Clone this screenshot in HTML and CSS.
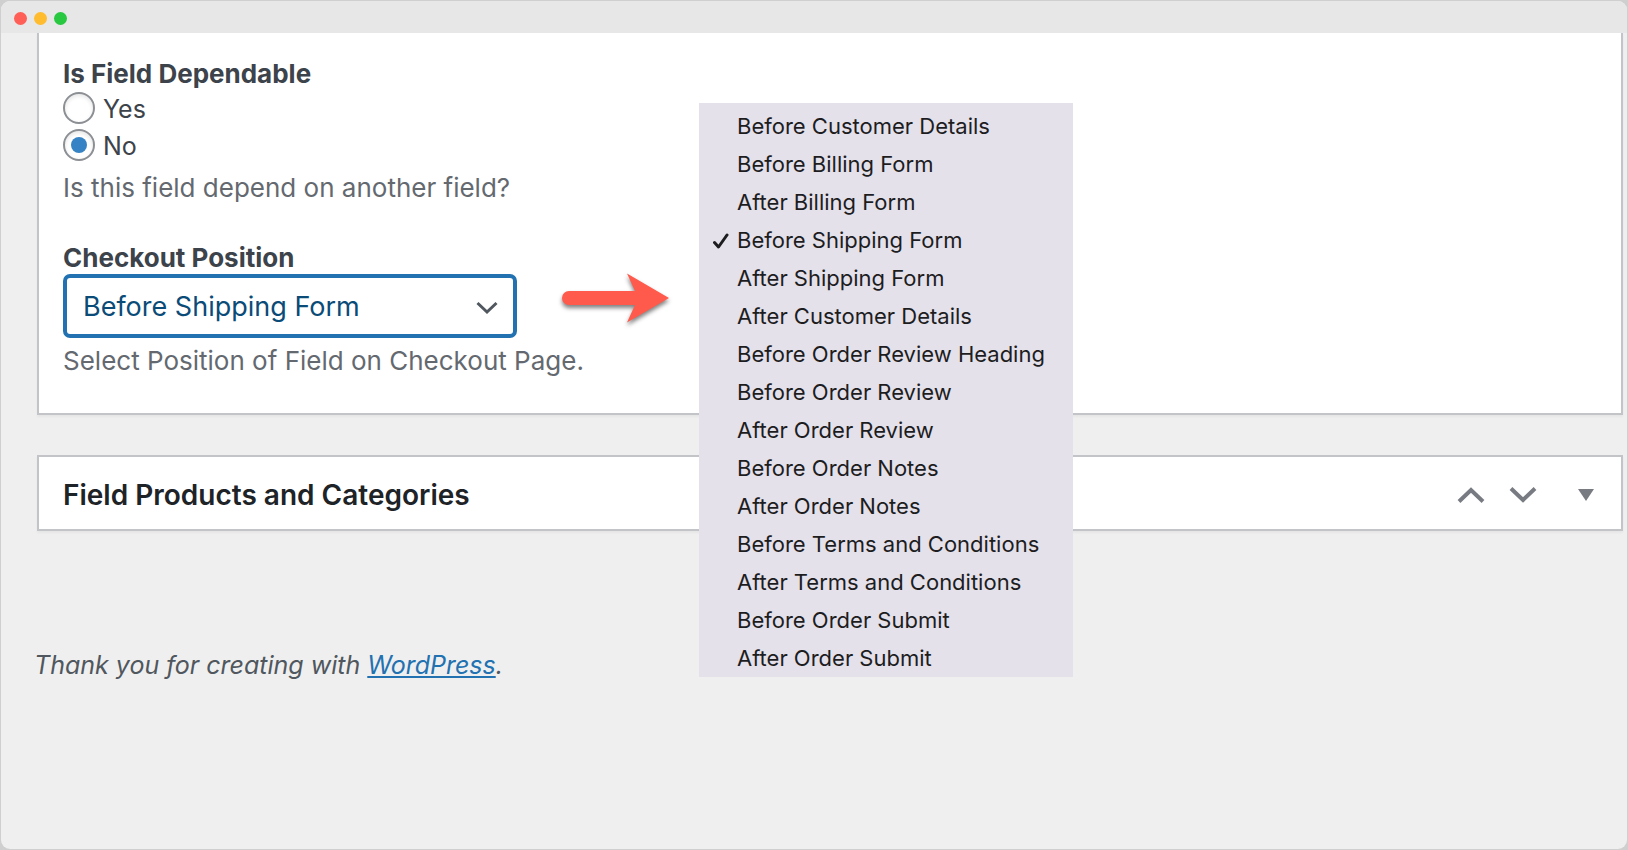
FILE: index.html
```html
<!DOCTYPE html>
<html lang="en">
<head>
<meta charset="utf-8">
<title>Checkout Field Settings</title>
<link rel="stylesheet" href="styles.css">
</head>
<body>
<div class="window">
  <header class="titlebar">
    <span class="dot dot-close"></span>
    <span class="dot dot-minimize"></span>
    <span class="dot dot-zoom"></span>
  </header>
  <main class="content">
    <section class="panel panel-fields">
      <fieldset class="field">
        <legend class="field-label">Is Field Dependable</legend>
        <div class="radio-group">
          <label class="radio-row"><input class="radio" type="radio" name="dependable" value="yes"><span class="radio-text">Yes</span></label>
          <label class="radio-row"><input class="radio" type="radio" name="dependable" value="no" checked><span class="radio-text">No</span></label>
        </div>
        <p class="description">Is this field depend on another field?</p>
      </fieldset>
      <div class="field">
        <label class="field-label" for="position">Checkout Position</label>
        <div class="select-row">
          <div class="select-wrap">
            <select class="select" id="position">
              <option>Before Shipping Form</option>
            </select>
            <svg class="select-chevron" viewBox="0 0 22 14" aria-hidden="true"><path d="M1.500 2l9.500 9 9.500-9"/></svg>
          </div>
          <svg class="arrow" viewBox="0 0 108 50" aria-hidden="true"><path d="M7 18H73L65 0.500L107 25L65 49.500L73 32H7A7 7 0 0 1 7 18Z"/></svg>
          <ul class="menu" role="listbox" aria-label="Checkout Position">
            <li class="menu-item" role="option">Before Customer Details</li>
            <li class="menu-item" role="option">Before Billing Form</li>
            <li class="menu-item" role="option">After Billing Form</li>
            <li class="menu-item" role="option" aria-selected="true"><svg class="check" viewBox="0 0 16 16" aria-hidden="true"><path d="M1.500 9.500L5.500 14L14 2"/></svg>Before Shipping Form</li>
            <li class="menu-item" role="option">After Shipping Form</li>
            <li class="menu-item" role="option">After Customer Details</li>
            <li class="menu-item" role="option">Before Order Review Heading</li>
            <li class="menu-item" role="option">Before Order Review</li>
            <li class="menu-item" role="option">After Order Review</li>
            <li class="menu-item" role="option">Before Order Notes</li>
            <li class="menu-item" role="option">After Order Notes</li>
            <li class="menu-item" role="option">Before Terms and Conditions</li>
            <li class="menu-item" role="option">After Terms and Conditions</li>
            <li class="menu-item" role="option">Before Order Submit</li>
            <li class="menu-item" role="option">After Order Submit</li>
          </ul>
        </div>
        <p class="description">Select Position of Field on Checkout Page.</p>
      </div>
    </section>
    <section class="panel panel-header">
      <h2 class="panel-title">Field Products and Categories</h2>
      <div class="panel-actions">
        <button class="icon-button" type="button" aria-label="Move up"><svg class="icon" viewBox="0 0 28 16" aria-hidden="true"><path d="M2 14.500L14 3l12 11.500"/></svg></button>
        <button class="icon-button" type="button" aria-label="Move down"><svg class="icon" viewBox="0 0 28 16" aria-hidden="true"><path d="M2 1.500L14 13l12-11.500"/></svg></button>
        <button class="icon-button icon-button-toggle" type="button" aria-label="Toggle panel"><svg class="icon-toggle" viewBox="0 0 16 12" aria-hidden="true"><path d="M0 0h16L8 12z"/></svg></button>
      </div>
    </section>
  </main>
  <footer class="footer">Thank you for creating with <a class="footer-link" href="#">WordPress</a>.</footer>
</div>
</body>
</html>
```
FILE: styles.css
```css
* { box-sizing: border-box; }

body {
  margin: 0;
  padding: 1px;
  min-height: 100vh;
  display: flex;
  background: #cfcfcf;
  color: #3c434a;
  font-family: Inter, "Liberation Sans", sans-serif;
  font-size: 25px;
  line-height: 36px;
}

.window {
  flex: 1;
  background: #efefef;
  border-radius: 9px;
  overflow: hidden;
}

.titlebar {
  display: flex;
  align-items: center;
  gap: 7px;
  height: 32px;
  padding: 2px 13px 0;
  background: #e7e7e7;
}

.dot { width: 13px; height: 13px; border-radius: 50%; }
.dot-close { background: #ff5f57; }
.dot-minimize { background: #febc2e; }
.dot-zoom { background: #28c840; }

.content { padding: 0 4px 0 36px; }

.panel {
  background: #fff;
  border: 2px solid #c3c4c7;
  box-shadow: 0 2px 2px rgba(0, 0, 0, 0.04);
}

.panel-fields {
  display: flex;
  flex-direction: column;
  gap: 37px;
  padding: 26px 24px 34px;
  border-top: 0;
}

.field { margin: 0; padding: 0; border: 0; min-width: 0; }

.field-label {
  display: block;
  padding: 0;
  font-size: 26px;
  font-weight: 700;
  line-height: 30px;
}

.radio-group { padding-bottom: 3px; }

.radio-row { display: flex; align-items: center; gap: 8px; height: 37px; }

.radio {
  appearance: none;
  display: grid;
  place-items: center;
  width: 32px;
  height: 32px;
  margin: 0;
  border: 2px solid #8c8f94;
  border-radius: 50%;
  background: #fff;
  box-shadow: inset 0 2px 4px rgba(0, 0, 0, 0.1);
}

.radio:checked::before {
  content: "";
  width: 16px;
  height: 16px;
  border-radius: 50%;
  background: #3582c4;
}

.radio-text { padding-top: 3px; }

.description { margin: 4px 0 0; color: #646970; font-size: 26px; }

.select-row { position: relative; display: flex; align-items: center; gap: 45px; }

.select-wrap { position: relative; width: 454px; }

.select {
  appearance: none;
  display: block;
  width: 100%;
  height: 64px;
  padding: 2px 48px 0 16px;
  border: 4px solid #2271b1;
  border-radius: 7px;
  background: #fff;
  color: #0a4b78;
  font: inherit;
  font-size: 27px;
}

.select-chevron {
  position: absolute;
  top: 27px;
  right: 19px;
  width: 22px;
  height: 14px;
  fill: none;
  stroke: #50575e;
  stroke-width: 3;
  pointer-events: none;
}

.arrow {
  width: 108px;
  height: 50px;
  margin-bottom: 16px;
  fill: #ff5a4b;
  overflow: visible;
  filter: drop-shadow(0 3px 2px rgba(0, 0, 0, 0.5));
}

.menu {
  position: absolute;
  top: -170px;
  left: 636px;
  width: 374px;
  margin: 0;
  padding: 4px 0 0;
  list-style: none;
  background: #e4e1ea;
  color: #1d1d1f;
  font-size: 22px;
  line-height: 38px;
}

.menu-item { position: relative; padding-left: 38px; white-space: nowrap; }

.check {
  position: absolute;
  top: 12px;
  left: 14px;
  width: 16px;
  height: 16px;
  fill: none;
  stroke: currentColor;
  stroke-width: 3;
  stroke-linecap: round;
  stroke-linejoin: round;
}

.panel-header {
  display: flex;
  align-items: center;
  justify-content: space-between;
  height: 76px;
  margin-top: 40px;
  padding: 3px 27px 0 24px;
}

.panel-title { margin: 0; color: #1d2327; font-size: 28px; font-weight: 600; }

.panel-actions { display: flex; align-items: center; gap: 24px; }

.icon-button { display: flex; padding: 0; border: 0; background: none; color: #787c82; }
.icon-button-toggle { margin-left: 17px; }

.icon { width: 28px; height: 16px; fill: none; stroke: currentColor; stroke-width: 4; }
.icon-toggle { width: 16px; height: 12px; fill: currentColor; }

.footer { margin: 116px 33px 0; color: #50575e; font-style: italic; }

.footer-link { color: #2271b1; }
```
